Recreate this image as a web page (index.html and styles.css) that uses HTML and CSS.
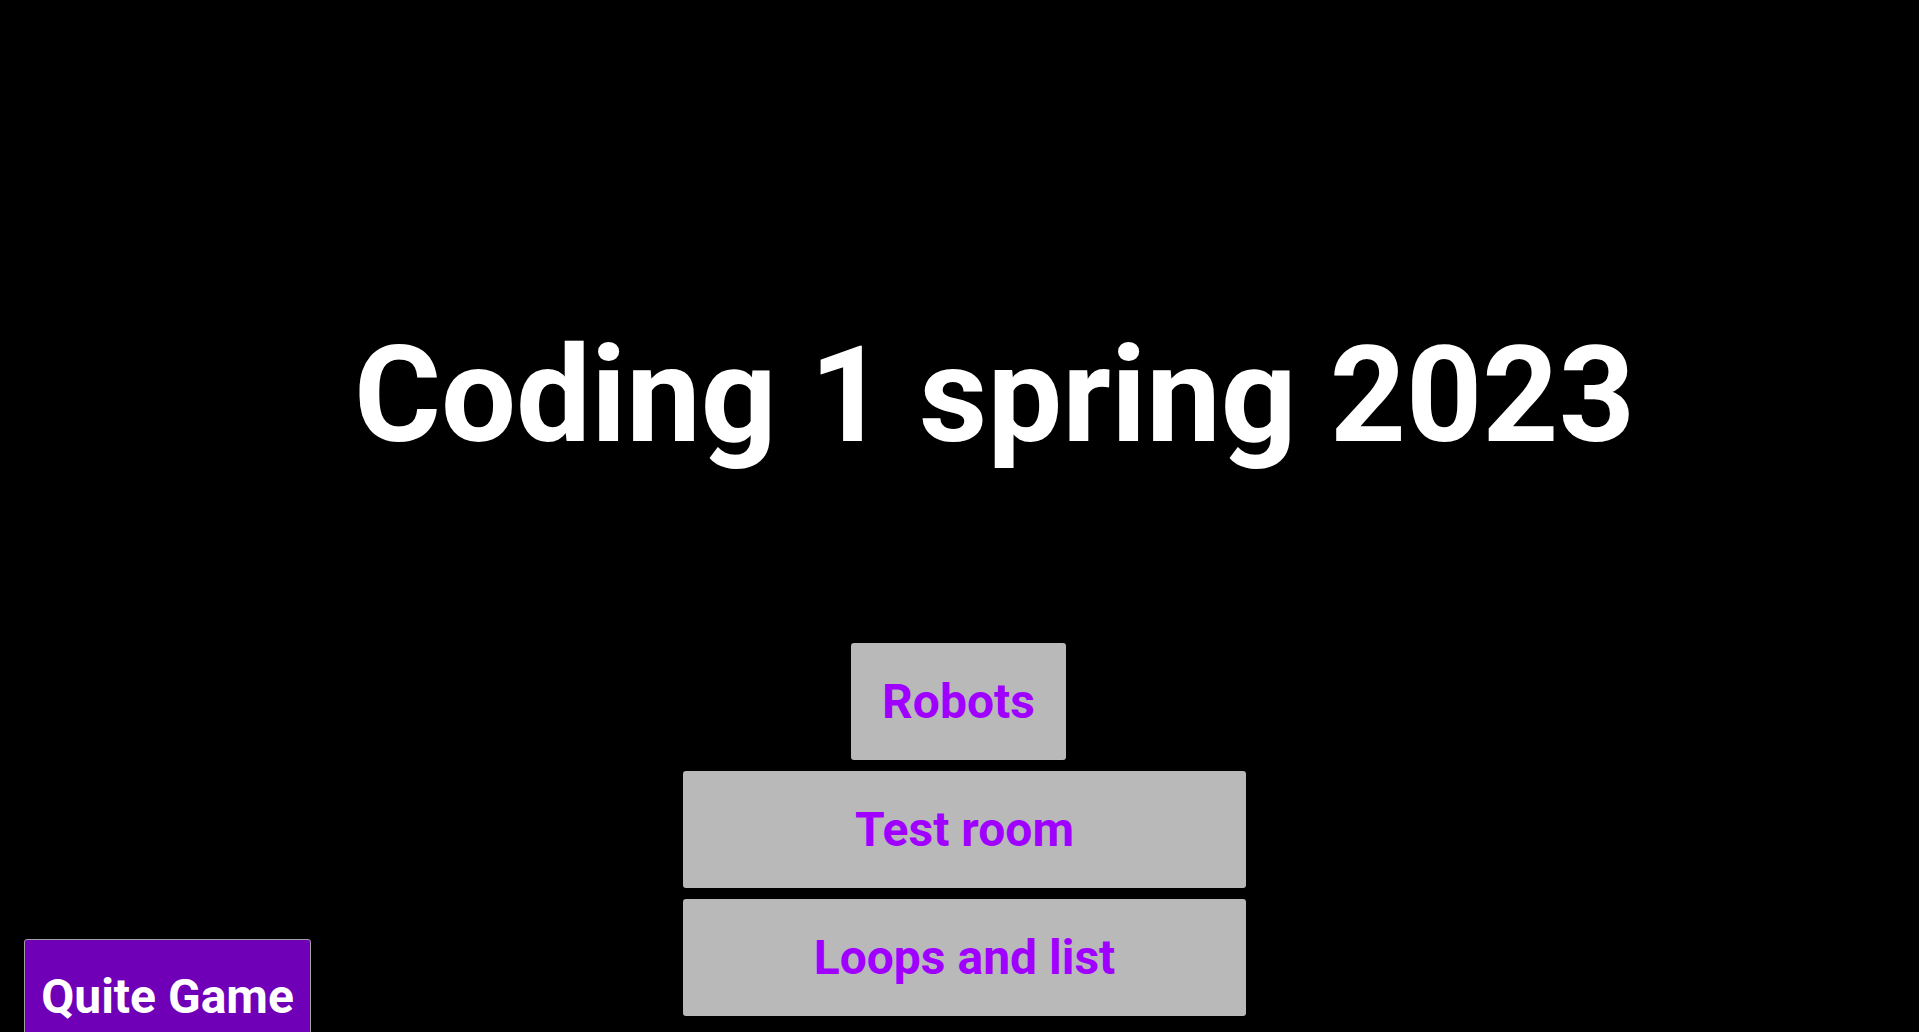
FILE: index.html
```html
<!DOCTYPE html>
<html lang="en">
<head>
<meta charset="utf-8">
<title>Coding 1 spring 2023</title>
<link rel="stylesheet" href="styles.css">
</head>
<body>
<div class="screen">
  <h1 class="title">Coding 1 spring 2023</h1>
  <nav class="menu">
    <button class="menu-btn menu-btn--short">Robots</button>
    <button class="menu-btn menu-btn--wide">Test room</button>
    <button class="menu-btn menu-btn--wide">Loops and list</button>
  </nav>
  <button class="quit-btn">Quite Game</button>
</div>
</body>
</html>
```
FILE: styles.css
```css
html, body {
  margin: 0;
  padding: 0;
  background: #000;
  height: 1032px;
  overflow: hidden;
}
.screen {
  position: relative;
  height: 1032px;
  display: flex;
  flex-direction: column;
  align-items: center;
  font-family: Roboto, "Liberation Sans", sans-serif;
}
.title {
  margin: 329px 0 0 70px;
  font-size: 133px;
  line-height: 1;
  font-weight: 700;
  color: #fff;
  white-space: nowrap;
}
.menu {
  margin-top: 181px;
  display: flex;
  flex-direction: column;
  align-items: center;
  gap: 11px;
  margin-left: 10px;
}
.menu-btn {
  box-sizing: border-box;
  height: 117px;
  display: flex;
  align-items: center;
  justify-content: center;
  border: none;
  border-radius: 3px;
  background: #b9b9b9;
  color: #a000ff;
  font-family: Roboto, "Liberation Sans", sans-serif;
  font-weight: 700;
  font-size: 48px;
  padding: 0;
}
.menu-btn--short {
  width: 215px;
  margin-right: 12px;
}
.menu-btn--wide {
  width: 563px;
}
.quit-btn {
  position: absolute;
  left: 24px;
  top: 939px;
  box-sizing: border-box;
  width: 287px;
  height: 120px;
  display: flex;
  align-items: flex-start;
  justify-content: center;
  padding: 28px 0 0;
  border: 1px solid #a0a0a0;
  border-radius: 3px;
  background: #7000b8;
  color: #fff;
  font-family: Roboto, "Liberation Sans", sans-serif;
  font-weight: 700;
  font-size: 48px;
  line-height: normal;
}
```
